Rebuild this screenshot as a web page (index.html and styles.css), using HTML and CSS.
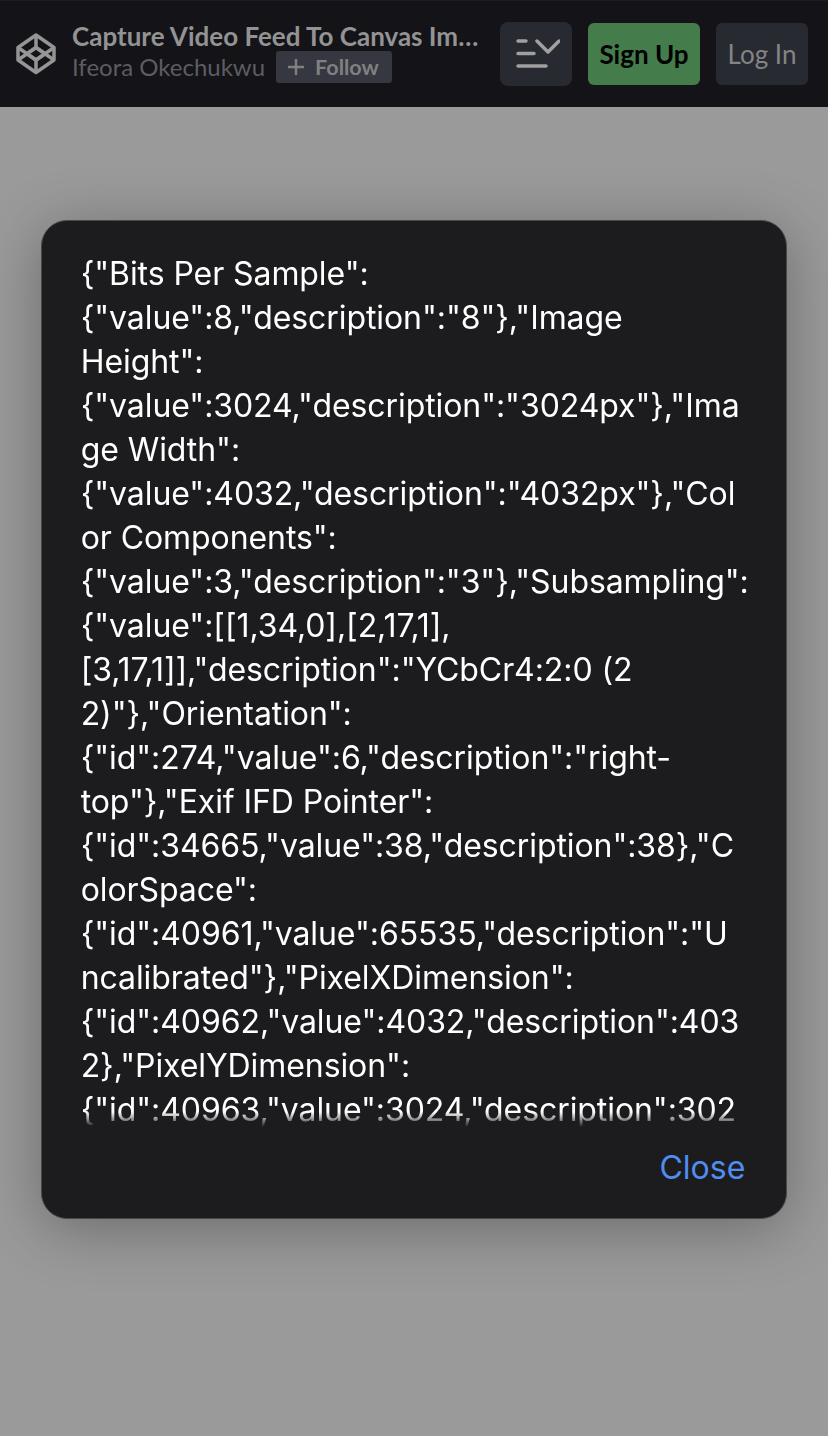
FILE: index.html
```html
<!DOCTYPE html>
<html>
    <head>
        <title>Capture Video Feed To Canvas Image</title>
        <link rel="stylesheet" href="styles.css">
    </head>
    <body>
        <header class="top-bar">
            <svg class="logo" viewBox="0 0 42 42" width="42" height="42">
                <g fill="none" stroke="#959595" stroke-width="3.500" stroke-linejoin="round">
                    <path d="M21 2 L39 14.500 V27 L21 39.500 L3 27 V14.500 Z"/>
                    <path d="M21 14.500 L30 20.750 L21 27 L12 20.750 Z"/>
                    <path d="M21 2 V14.500 M21 27 V39.500 M3 14.500 L21 27 L39 14.500 M3 27 L21 14.500 L39 27"/>
                </g>
            </svg>
            <div class="pen-info">
                <div class="pen-title">Capture Video Feed To Canvas Image</div>
                <div class="pen-owner">
                    <span class="owner-name">Ifeora Okechukwu</span>
                    <button class="follow-btn">
                        <svg viewBox="0 0 16 16" width="16" height="16">
                            <path d="M0 8 H16 M8 0 V16" fill="none" stroke="#808080" stroke-width="2.500"/>
                        </svg>
                        Follow
                    </button>
                </div>
            </div>
            <button class="views-btn">
                <svg viewBox="0 0 48 32" width="48" height="32">
                    <g fill="none" stroke="#a0a0a0" stroke-width="3.500" stroke-linecap="round" stroke-linejoin="round">
                        <path d="M6 3 H14 M6 15.500 H22 M6 28 H34"/>
                        <path d="M25 3 L36 14 L47 3"/>
                    </g>
                </svg>
            </button>
            <button class="signup-btn">Sign Up</button>
            <button class="login-btn">Log In</button>
        </header>
        <main class="backdrop">
            <div class="dialog">
                <div class="dialog-text">
                    {"Bits Per Sample":<br>
                    {"value":8,"description":"8"},"Image<br>
                    Height":<br>
                    {"value":3024,"description":"3024px"},"Ima<br>
                    ge Width":<br>
                    {"value":4032,"description":"4032px"},"Col<br>
                    or Components":<br>
                    {"value":3,"description":"3"},"Subsampling":<br>
                    {"value":[[1,34,0],[2,17,1],<br>
                    [3,17,1]],"description":"YCbCr4:2:0 (2<br>
                    2)"},"Orientation":<br>
                    {"id":274,"value":6,"description":"right-<br>
                    top"},"Exif IFD Pointer":<br>
                    {"id":34665,"value":38,"description":38},"C<br>
                    olorSpace":<br>
                    {"id":40961,"value":65535,"description":"U<br>
                    ncalibrated"},"PixelXDimension":<br>
                    {"id":40962,"value":4032,"description":403<br>
                    2},"PixelYDimension":<br>
                    {"id":40963,"value":3024,"description":302
                </div>
                <div class="dialog-actions">
                    <a class="close-link">Close</a>
                </div>
            </div>
        </main>
    </body>
</html>
```

FILE: styles.css
```css
* {
    box-sizing: border-box;
}
html, body {
    margin: 0;
    height: 100%;
}
body {
    display: flex;
    flex-direction: column;
    height: 1436px;
    overflow: hidden;
    background: #9a9a9a;
}
button {
    border: 0;
    padding: 0;
    font-family: Lato, sans-serif;
}

.top-bar {
    display: flex;
    align-items: center;
    flex: 0 0 107px;
    padding: 0 20px 0 15px;
    background: #131318;
    border-top: 1px solid #1c1c1f;
}
.logo {
    flex: none;
    margin-right: 15px;
}
.pen-info {
    flex: none;
    width: 412px;
    margin-right: 16px;
    margin-bottom: 5px;
    font-family: Lato, sans-serif;
}
.pen-title {
    overflow: hidden;
    white-space: nowrap;
    text-overflow: ellipsis;
    font-size: 26px;
    font-weight: 700;
    line-height: 30px;
    color: #939393;
}
.pen-owner {
    display: flex;
    align-items: center;
}
.owner-name {
    font-size: 24px;
    line-height: 32px;
    color: #5d5d61;
}
.follow-btn {
    display: flex;
    align-items: center;
    justify-content: flex-start;
    gap: 11px;
    height: 32px;
    width: 116px;
    margin-left: 11px;
    padding-left: 12px;
    border-radius: 3px;
    background: #353741;
    color: #808080;
    font-size: 21.500px;
    font-weight: 700;
}
.views-btn {
    display: flex;
    align-items: center;
    justify-content: center;
    flex: none;
    width: 72px;
    height: 64px;
    margin-right: 16px;
    border-radius: 8px;
    background: #282a31;
}
.signup-btn {
    flex: none;
    width: 112px;
    height: 62px;
    margin-right: 16px;
    border-radius: 6px;
    background: #457c4b;
    color: #000;
    font-size: 26px;
    font-weight: 700;
}
.login-btn {
    flex: none;
    width: 92px;
    height: 62px;
    border-radius: 6px;
    background: #282a31;
    color: #848484;
    font-size: 26px;
}

.backdrop {
    flex: 1;
    padding: 113px 40.700px 0;
}
.dialog {
    height: 999px;
    padding: 31px 0 0 39px;
    border: 1px solid #4a4a4c;
    border-radius: 26px;
    background: #1c1c1e;
    box-shadow: 0 10px 60px rgba(0, 0, 0, 0.3);
    font-family: Inter, sans-serif;
}
.dialog-text {
    height: 875px;
    overflow: hidden;
    white-space: nowrap;
    font-size: 32px;
    letter-spacing: -0.080px;
    line-height: 44px;
    color: #fff;
    -webkit-mask-image: linear-gradient(to bottom, #000 860px, transparent 875px);
    mask-image: linear-gradient(to bottom, #000 860px, transparent 875px);
}
.dialog-actions {
    display: flex;
    justify-content: flex-end;
    margin-top: 22px;
    padding-right: 41px;
}
.close-link {
    font-size: 32px;
    line-height: 38px;
    color: #4f8ef0;
}
```
